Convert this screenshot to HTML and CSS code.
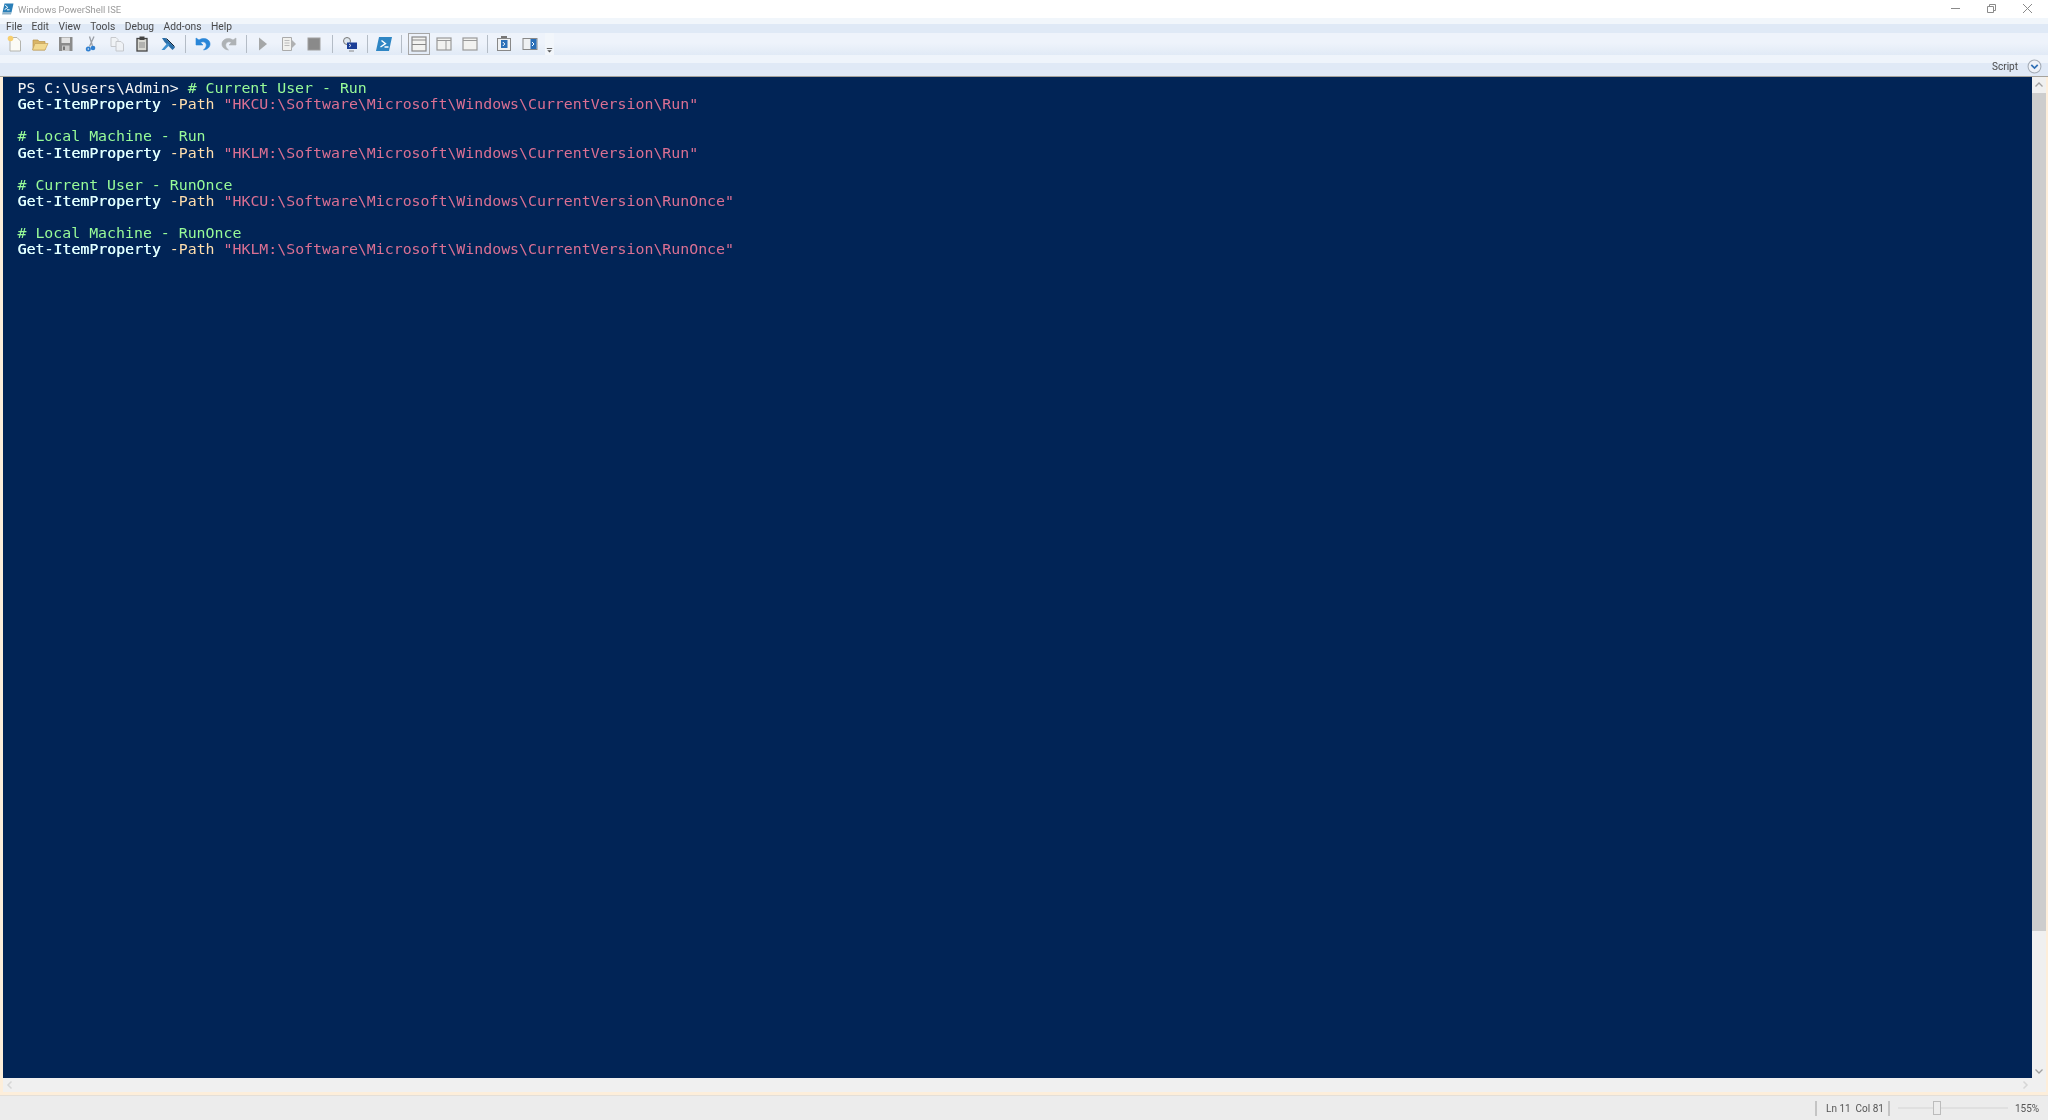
FILE: index.html
```html
<!DOCTYPE html>
<html lang="en">
<head>
<meta charset="utf-8">
<title>Windows PowerShell ISE</title>
<link rel="stylesheet" href="styles.css">
</head>
<body>
<div class="app">
  <header class="titlebar">
    <svg class="app-icon" viewBox="0 0 12 12"><path d="M2.500 0.500h9l-2 9h-9z" fill="#2a7fb8"/><path d="M0.500 9.500h9l-.5 2h-9z" fill="#8fb3c9"/><path d="M3.200 2.200l2.600 2.200-3.200 2.200M5 6.800h2.600" stroke="#fff" stroke-width="1" fill="none"/></svg>
    <span class="title-text">Windows PowerShell ISE</span>
    <div class="window-controls">
      <svg class="win-btn" viewBox="0 0 36 18"><path d="M13 8.500h9" stroke="#8a8a8a"/></svg>
      <svg class="win-btn" viewBox="0 0 36 18"><path d="M13.500 6.500h6v6h-6zM15.500 6.500v-2h6v6h-2" stroke="#8a8a8a" fill="none"/></svg>
      <svg class="win-btn" viewBox="0 0 36 18"><path d="M13 4l9 9M22 4l-9 9" stroke="#8a8a8a" fill="none"/></svg>
    </div>
  </header>

  <nav class="menubar">
    <span class="menu-item">File</span>
    <span class="menu-item">Edit</span>
    <span class="menu-item">View</span>
    <span class="menu-item">Tools</span>
    <span class="menu-item">Debug</span>
    <span class="menu-item">Add-ons</span>
    <span class="menu-item">Help</span>
  </nav>

  <div class="toolbar">
    <span class="tool"><svg viewBox="0 0 20 20"><path d="M5 3.500h7l3.500 3.500v10h-10.500z" fill="#fbfbf6" stroke="#b4b4ae"/><circle cx="5.500" cy="4.500" r="2.800" fill="#f7cf70"/></svg></span>
    <span class="tool"><svg viewBox="0 0 20 20"><path d="M3 6h5l1 1.500h6v8.500h-12z" fill="#d9b566" stroke="#b8934a" stroke-width=".7"/><path d="M2.500 16l2.500-6.500h13l-3 6.500z" fill="#f2d98f" stroke="#c5a25a" stroke-width=".7"/></svg></span>
    <span class="tool"><svg viewBox="0 0 20 20"><rect x="3" y="3" width="13.500" height="14" fill="#8b8b8b"/><rect x="5.500" y="3.500" width="8.500" height="5.500" fill="#e3e3e3"/><rect x="6" y="11.500" width="7.500" height="5.500" fill="#c9c9c9"/><rect x="7" y="12.500" width="2" height="3.500" fill="#777"/></svg></span>
    <span class="tool"><svg viewBox="0 0 20 20"><path d="M13 2.500l-4.500 10M8.500 2.500l3 9.500" stroke="#9a9fa6" stroke-width="1.300" fill="none"/><circle cx="7.300" cy="15" r="2.500" fill="#2f7fd0"/><circle cx="12" cy="14" r="2.300" fill="#2f7fd0"/><circle cx="7.300" cy="15" r=".8" fill="#e5edf7"/></svg></span>
    <span class="tool"><svg viewBox="0 0 20 20" opacity=".55"><path d="M4 3.500h5l2 2v7h-7z" fill="#f3f3f3" stroke="#a8a8a8"/><path d="M9 7.500h5l2.500 2.500v7h-7.500z" fill="#f3f3f3" stroke="#a8a8a8"/></svg></span>
    <span class="tool"><svg viewBox="0 0 20 20"><rect x="5" y="4.500" width="10" height="12.500" fill="#d8d8d2" stroke="#444" stroke-width="1.300"/><rect x="7.500" y="2.500" width="5" height="3.500" fill="#444"/><path d="M7 9h6M7 11h6M7 13h6" stroke="#8c8c8c"/></svg></span>
    <span class="tool"><svg viewBox="0 0 20 20"><path d="M4 4h3.500l9.500 9.500-2.500 2.500-8-8z" fill="#2b6ea8"/><path d="M3.500 16l6-7 2 2-5 5z" fill="#3c8fd0"/><path d="M8.500 4.500l8 8" stroke="#123" stroke-width="1"/></svg></span>
    <span class="sep sep-first"></span>
    <span class="tool"><svg viewBox="0 0 20 20"><path d="M3 4v7h7l-2.400-2.400c2.300-1.500 5-.7 5.600 1.700.5 2-.6 3.900-2.700 5.700 4.400-.6 6.800-3.200 6.500-6.500-.4-4.200-6-6.600-11-3.500z" fill="#2a86d8" stroke="#2a86d8" stroke-width=".6"/></svg></span>
    <span class="tool"><svg viewBox="0 0 20 20"><path d="M17 4v7h-7l2.400-2.400c-2.300-1.500-5-.7-5.600 1.700-.5 2 .6 3.900 2.700 5.700-4.400-.6-6.800-3.200-6.500-6.500.4-4.200 6-6.600 11-3.500z" fill="#aeb2b5" stroke="#aeb2b5" stroke-width=".6"/></svg></span>
    <span class="sep"></span>
    <span class="tool"><svg viewBox="0 0 20 20"><path d="M6 3.500l8 6.500-8 6.500z" fill="#a5a7a8"/></svg></span>
    <span class="tool"><svg viewBox="0 0 20 20"><path d="M3.500 3.500h9v13h-9z" fill="#f1f1ee" stroke="#aaa"/><path d="M5.500 6.500h5M5.500 9h5M5.500 11.500h5" stroke="#bbb"/><path d="M12 5l5 5-5 5z" fill="#b0b1b2"/></svg></span>
    <span class="tool"><svg viewBox="0 0 20 20"><rect x="4" y="4" width="12" height="12" fill="#8a8a8a" stroke="#9f9f9f"/></svg></span>
    <span class="sep sep-wide"></span>
    <span class="tool"><svg viewBox="0 0 20 20"><circle cx="7" cy="7" r="3.500" fill="#dfe7ee" stroke="#777"/><rect x="7" y="8.500" width="10" height="6.500" fill="#1c3f97"/><path d="M9 10l2 1.500-2 1.500" stroke="#fff" fill="none" stroke-width=".8"/><path d="M9 17h5" stroke="#888"/></svg></span>
    <span class="sep"></span>
    <span class="tool"><svg viewBox="0 0 20 20"><path d="M5 3h13l-3 14h-13z" fill="#2f86c4"/><path d="M7.500 6.500l4 3.200-5 3.300M10.500 13h4" stroke="#fff" stroke-width="1.400" fill="none"/></svg></span>
    <span class="sep"></span>
    <span class="tool tool-active"><svg viewBox="0 0 20 20"><rect x="3" y="3" width="14" height="14" fill="#f2f2f0" stroke="#888" stroke-width="1.200"/><path d="M3 6h14M3 10.500h14" stroke="#888"/></svg></span>
    <span class="tool"><svg viewBox="0 0 20 20"><rect x="3" y="4" width="14" height="12" fill="#f2f2f0" stroke="#999" stroke-width="1.200"/><path d="M3 6.500h14M12 6.500v9.500" stroke="#999"/></svg></span>
    <span class="tool"><svg viewBox="0 0 20 20"><rect x="3" y="4" width="14" height="12" fill="#f2f2f0" stroke="#999" stroke-width="1.200"/><path d="M3 6.500h14" stroke="#999"/></svg></span>
    <span class="sep"></span>
    <span class="tool"><svg viewBox="0 0 20 20"><path d="M7 2h6v3h-6z" fill="#777"/><rect x="3.500" y="4.500" width="13" height="12" fill="#eef0f2" stroke="#888"/><rect x="7" y="6" width="6.500" height="8" fill="#2a6fb8"/><path d="M8.800 8l2 2-2 2" stroke="#fff" fill="none"/></svg></span>
    <span class="tool"><svg viewBox="0 0 20 20"><rect x="3" y="4.500" width="14" height="11" fill="#eef0f2" stroke="#888"/><rect x="10.500" y="5" width="6" height="10" fill="#2a6fb8"/><path d="M12 8l2 2-2 2" stroke="#fff" fill="none"/></svg></span>
    <span class="overflow"><svg viewBox="0 0 10 24"><path d="M2 17h6" stroke="#555"/><path d="M2.500 19h5l-2.500 2.500z" fill="#555"/></svg></span>
  </div>

  <div class="workspace">
    <div class="script-bar">
      <span class="script-label">Script</span>
      <svg class="collapse" viewBox="0 0 14 14"><circle cx="7" cy="7" r="6" fill="#eef2f8" stroke="#a4acb6"/><path d="M4 5.500l3 3 3-3" stroke="#2f6fb5" stroke-width="1.600" fill="none"/></svg>
    </div>
    <div class="editor-row">
<pre class="console"><span class="prompt">PS C:\Users\Admin&gt; </span><span class="comment"># Current User - Run</span>
<span class="cmd">Get-ItemProperty</span> <span class="param">-Path</span> <span class="str">"HKCU:\Software\Microsoft\Windows\CurrentVersion\Run"</span>

<span class="comment"># Local Machine - Run</span>
<span class="cmd">Get-ItemProperty</span> <span class="param">-Path</span> <span class="str">"HKLM:\Software\Microsoft\Windows\CurrentVersion\Run"</span>

<span class="comment"># Current User - RunOnce</span>
<span class="cmd">Get-ItemProperty</span> <span class="param">-Path</span> <span class="str">"HKCU:\Software\Microsoft\Windows\CurrentVersion\RunOnce"</span>

<span class="comment"># Local Machine - RunOnce</span>
<span class="cmd">Get-ItemProperty</span> <span class="param">-Path</span> <span class="str">"HKLM:\Software\Microsoft\Windows\CurrentVersion\RunOnce"</span></pre>
      <div class="vscroll">
        <svg class="arrow" viewBox="0 0 14 14"><path d="M3.500 8.500l3.500-3.500 3.500 3.500" stroke="#a0a0a0" stroke-width="1.300" fill="none"/></svg>
        <div class="vthumb"></div>
        <div class="vtrack"></div>
        <svg class="arrow" viewBox="0 0 14 14"><path d="M3.500 5.500l3.500 3.500 3.500-3.500" stroke="#a0a0a0" stroke-width="1.300" fill="none"/></svg>
      </div>
    </div>
    <div class="hscroll">
      <svg class="arrow" viewBox="0 0 14 14"><path d="M8.500 3.500l-3.500 3.500 3.500 3.500" stroke="#d6d6d6" stroke-width="1.500" fill="none"/></svg>
      <svg class="arrow" viewBox="0 0 14 14"><path d="M5.500 3.500l3.500 3.500-3.500 3.500" stroke="#d6d6d6" stroke-width="1.500" fill="none"/></svg>
      <div class="corner"></div>
    </div>
  </div>

  <footer class="statusbar">
    <span class="status-sep"></span>
    <span class="status-pos">Ln 11&nbsp; Col 81</span>
    <span class="status-sep"></span>
    <div class="slider"><span class="slider-thumb"></span></div>
    <span class="zoom-level">155%</span>
  </footer>
</div>
</body>
</html>
```
FILE: styles.css
```css
* { box-sizing: border-box; }
html, body { margin: 0; height: 100%; overflow: hidden; }
body { background: #ececec; font-family: Roboto, "Open Sans", sans-serif; }
.app { display: flex; flex-direction: column; width: 2048px; height: 1120px; }

.titlebar { display: flex; align-items: center; height: 18px; background: #fff; padding-left: 2px; flex: none; }
.app-icon { width: 12px; height: 12px; flex: none; filter: blur(.3px); }
.title-text { margin-left: 4px; font-size: 9.400px; color: #9a9a9a; filter: blur(.3px); }
.window-controls { margin-left: auto; display: flex; margin-right: 2px; filter: blur(.3px); }
.win-btn { width: 36px; height: 18px; }

.menubar { display: flex; align-items: center; height: 15px; flex: none; padding: 1px 0 0 6px; gap: 9.500px; font-size: 10.250px; color: #4a4a4a; background: linear-gradient(#f1f6fb 0, #f1f6fb 40%, #dfe9f6 40%, #dfe9f6 100%); }
.menu-item { filter: blur(.3px); }

.toolbar { display: flex; align-items: center; height: 22px; flex: none; padding-left: 2px; background: linear-gradient(#eef3fb 0, #eef3fb 45%, #e1eaf6 100%); }
.tool { width: 25.500px; height: 22px; display: flex; align-items: center; justify-content: center; flex: none; }
.tool svg { width: 20px; height: 20px; filter: blur(.4px); }
.tool-active svg { outline: 1.500px solid #a6a6a6; outline-offset: -.5px; }
.sep { width: 9px; height: 18px; flex: none; background: linear-gradient(#b4bcc6, #b4bcc6) center / 1px 100% no-repeat; }
.sep-first { width: 10px; }
.sep-wide { width: 10px; }
.overflow { width: 9px; height: 22px; margin-left: 2.500px; background: #f2f6fb; flex: none; }
.overflow svg { width: 9px; height: 22px; display: block; }

.workspace { flex: 1; display: flex; flex-direction: column; min-height: 0; padding: 0 2px 3px 3px; background: #fdeeda; }
.script-bar { display: flex; align-items: center; justify-content: flex-end; height: 22px; flex: none; margin: 0 -2px 0 -3px; padding: 1px 6px 0 0; gap: 9px; background: linear-gradient(#eff4fb 0, #eff4fb 36%, #e0e9f6 36%, #e0e9f6 100%); border-bottom: 1px solid #a5a29b; }
.script-label { font-size: 10px; color: #4a4a4a; filter: blur(.3px); }
.collapse { width: 15px; height: 15px; filter: blur(.3px); }

.editor-row { flex: 1; display: flex; min-height: 0; }
.console { flex: 1; margin: 0; padding: 3px 0 0 14.500px; background: #012456; font-family: "DejaVu Sans Mono", "Liberation Mono", monospace; font-size: 14.880px; line-height: 16.120px; color: #f5f5f5; overflow: hidden; filter: blur(.35px); }
.prompt { color: #f5f5f5; }
.comment { color: #98fb98; }
.cmd { color: #e0ffff; text-shadow: .4px 0 .4px currentColor; }
.param { color: #ffdead; }
.str { color: #db7093; }

.vscroll { width: 14px; flex: none; display: flex; flex-direction: column; background: #f0f0f0; }
.arrow { width: 14px; height: 14px; flex: none; display: block; }
.vscroll .arrow:first-child { height: 16px; }
.vthumb { height: 838px; background: #cdcdcd; flex: none; }
.vtrack { flex: 1; }

.hscroll { height: 14px; flex: none; display: flex; background: #f0f0f0; }
.hscroll .arrow:nth-child(2) { margin-left: auto; margin-right: 1px; }
.corner { width: 13px; background: #f0f0f0; }

.statusbar { display: flex; align-items: center; height: 25px; flex: none; background: #ececec; border-top: 1px solid #e4dfd8; font-size: 10px; color: #555; padding-left: 1815px; }
.status-sep { width: 2px; height: 15px; background: #c4c4c4; flex: none; }
.status-pos { width: 71px; padding-left: 9px; filter: blur(.3px); white-space: nowrap; }
.slider { position: relative; width: 110px; height: 2px; margin-left: 8px; background: #e0e0e0; flex: none; }
.slider-thumb { position: absolute; left: 35px; top: -6px; width: 8px; height: 14px; background: #ececec; border: 1px solid #bcbcbc; }
.zoom-level { margin-left: 7px; filter: blur(.3px); }
```
